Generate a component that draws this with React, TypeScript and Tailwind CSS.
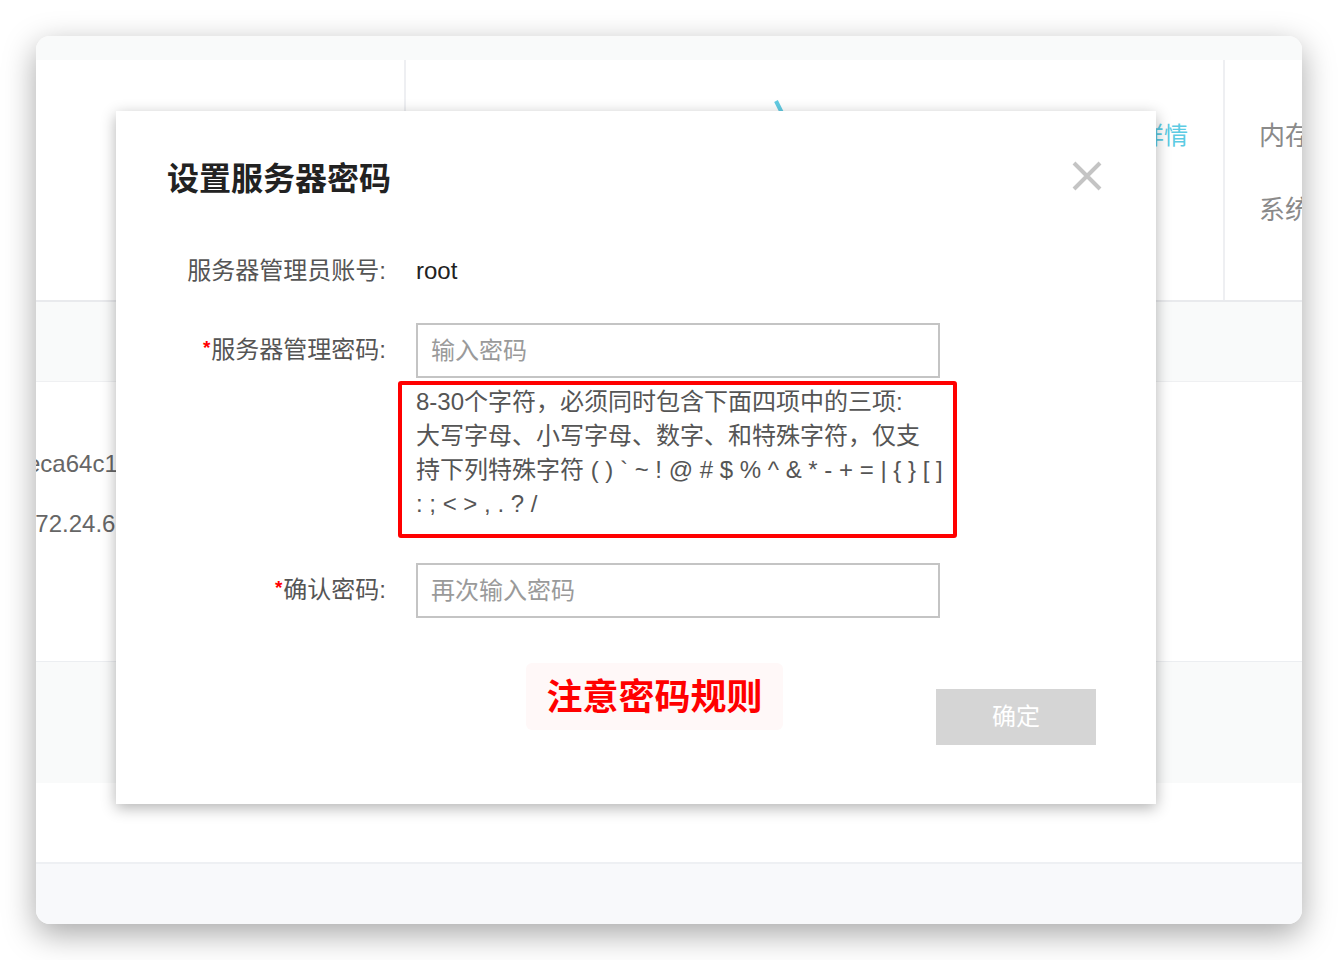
const font = "font-['Liberation_Sans','Noto_Sans_CJK_SC',sans-serif]";

const Label = ({ text, required }: { text: string; required?: boolean }) => (
  <div className="w-[270px] shrink-0 text-right text-[24px] leading-[34px] text-[#555]">
    {required && <span className="relative -top-[4px] mr-[1px] text-[19px] font-bold text-[#ff0000]">*</span>}
    {text}
  </div>
);

const Field = ({ placeholder }: { placeholder: string }) => (
  <div className="ml-[30px] flex h-[55px] w-[524px] items-center border-2 border-[#c4c4c4] pl-[13px] text-[24px] text-[#9a9a9a]">
    {placeholder}
  </div>
);

const PasswordModal = () => {
  const rules = [
    '8-30个字符，必须同时包含下面四项中的三项:',
    '大写字母、小写字母、数字、和特殊字符，仅支',
    '持下列特殊字符 ( ) ` ~ ! @ # $ % ^ & * - + = | { } [ ]',
    ': ; < > , . ? /',
  ];

  return (
    <div className="absolute left-[80px] top-[75px] h-[693px] w-[1040px] bg-white shadow-[0_4px_14px_rgba(0,0,0,0.3)]">
      {/* Header */}
      <div className="mt-[48px] flex h-[40px] items-center justify-between pl-[51px] pr-[54px]">
        <h2 className="text-[32px] font-bold leading-[40px] text-[#222]">设置服务器密码</h2>
        <svg width="30" height="30" viewBox="0 0 30 30" className="-mt-[7px]">
          <path d="M2 2 L28 28 M28 2 L2 28" stroke="#c4c4c4" strokeWidth="4" />
        </svg>
      </div>

      {/* Account */}
      <div className="mt-[55px] flex items-center">
        <Label text="服务器管理员账号:" />
        <div className="ml-[30px] text-[24px] leading-[34px] text-[#222]">root</div>
      </div>

      {/* Password */}
      <div className="mt-[35px] flex items-center">
        <Label text="服务器管理密码:" required />
        <Field placeholder="输入密码" />
      </div>

      {/* Rules hint */}
      <div className="ml-[282px] mt-[3px] w-[559px] rounded-[3px] border-4 border-[#ff0000] pb-[13px] pl-[14px] text-[24px] leading-[34px] text-[#555]">
        {rules.map((line, i) => (
          <div key={i} className="whitespace-nowrap">{line}</div>
        ))}
      </div>

      {/* Confirm */}
      <div className="mt-[25px] flex items-center">
        <Label text="确认密码:" required />
        <Field placeholder="再次输入密码" />
      </div>

      {/* Footer */}
      <div className="mt-[45px] flex items-start">
        <div className="ml-[410px] flex h-[67px] w-[257px] items-center justify-center rounded-[6px] bg-[#fff8f8] pt-[3px] text-[36px] font-bold text-[#ff0000]">
          注意密码规则
        </div>
        <button className="ml-auto mr-[60px] mt-[26px] h-[56px] w-[160px] bg-[#d5d5d5] text-[24px] text-white">
          确定
        </button>
      </div>
    </div>
  );
};

export default function App() {
  return (
    <div className={`h-[960px] w-[1338px] bg-white p-[36px] ${font}`}>
      <div className="relative h-[888px] w-[1266px] overflow-hidden rounded-[14px] bg-white shadow-[0_10px_32px_rgba(0,0,0,0.35)]">
        <div className="h-[24px] bg-[#f9fafa]" />

        <div className="flex h-[242px] border-b-2 border-[#e9eaed]">
          <div className="w-[368px] shrink-0" />
          <div className="w-[2px] shrink-0 bg-[#eeeff2]" />
          <div className="flex w-[817px] shrink-0">
            <svg className="h-full min-w-0 flex-1">
              <line x1="370" y1="41" x2="376" y2="53" stroke="#62cbe2" strokeWidth="4" />
            </svg>
            <div className="shrink-0 pr-[35px] pt-[58px] text-[24px] leading-[36px] text-[#5ccbe3]">详情</div>
          </div>
          <div className="w-[2px] shrink-0 bg-[#eeeff2]" />
          <div className="min-w-0 flex-1 overflow-hidden whitespace-nowrap pl-[34px] pt-[58px] text-[26px] leading-[36px] text-[#8a8a8a]">
            <div>内存</div>
            <div className="mt-[38px]">系统</div>
          </div>
        </div>

        <div className="h-[79px] bg-[#f9fafa]" />

        <div className="h-[280px] border-t border-[#eff0f2] pt-[67px] text-[24px] leading-[30px] text-[#666]">
          <div className="-ml-[9px] whitespace-nowrap">eca64c1d0e</div>
          <div className="-ml-[14px] mt-[30px] whitespace-nowrap">172.24.61.8</div>
        </div>

        <div className="h-[122px] border-t border-[#eceef1] bg-[#f9fafa]" />
        <div className="h-[79px] bg-white" />
        <div className="h-[62px] border-t-2 border-[#eef0f3] bg-[#f8f9fb]" />

        <PasswordModal />
      </div>
    </div>
  );
}
